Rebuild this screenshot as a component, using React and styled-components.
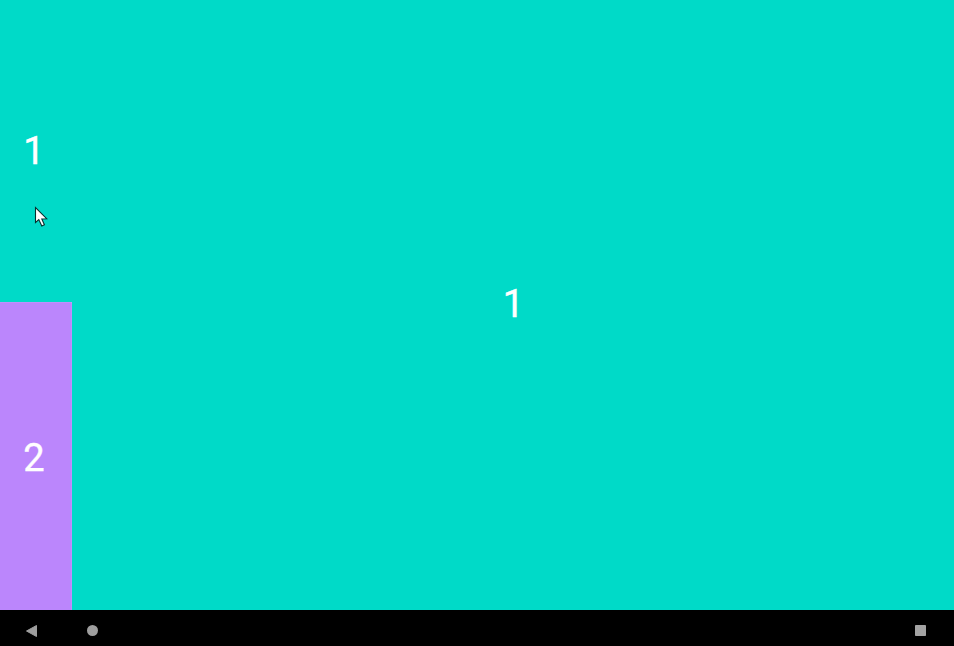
import React from "react"
import styled, { createGlobalStyle } from "styled-components"

const TEAL = "#00dac8"
const PURPLE = "#bb86fc"

const GlobalStyle = createGlobalStyle`
  html, body {
    margin: 0;
    padding: 0;
    height: 100%;
    overflow: hidden;
    background: ${TEAL};
    font-family: Roboto, "Liberation Sans", sans-serif;
  }
  #root {
    height: 100%;
  }
`
const Screen = styled.div`
  position: relative;
  display: flex;
  flex-direction: column;
  width: 954px;
  height: 646px;
`
const Content = styled.div`
  flex: 1;
  display: flex;
  min-height: 0;
`
const Sidebar = styled.div`
  width: 72px;
  display: flex;
  flex-direction: column;
`
const Tab = styled.div`
  height: ${(p) => p.$height}px;
  box-sizing: border-box;
  display: flex;
  align-items: center;
  justify-content: center;
  padding-right: 4px;
  padding-top: ${(p) => p.$offset}px;
  color: #fff;
  font-size: 38px;
  -webkit-text-stroke: 0.4px #fff;
  background: ${(p) => p.$color};
  box-shadow: ${(p) => (p.$raised ? "inset 0 1px 1px rgba(255,255,255,0.1), inset -1px 0 0 rgba(255,255,255,0.08)" : "none")};
`
const Main = styled.div`
  flex: 1;
  display: flex;
  align-items: center;
  justify-content: center;
  padding-bottom: 3px;
  padding-left: 1px;
  color: #fff;
  font-size: 38px;
  -webkit-text-stroke: 0.4px #fff;
  background: ${TEAL};
`
const NavBar = styled.div`
  height: 36px;
  box-sizing: border-box;
  flex: none;
  background: #000;
  display: flex;
  align-items: center;
  padding: 5px 28px 0 26px;
`
const NavIcon = styled.svg`
  display: block;
  margin-left: ${(p) => p.$gap || 0}px;
  margin-right: ${(p) => (p.$push ? "auto" : "0")};
`
const Cursor = styled.svg`
  position: absolute;
  left: 34px;
  top: 206px;
`

const App = () => (
  <Screen>
    <GlobalStyle />
    <Content>
      <Sidebar>
        <Tab $color={TEAL} $height={302} $offset={0}>1</Tab>
        <Tab $color={PURPLE} $height={308} $offset={4} $raised>2</Tab>
      </Sidebar>
      <Main>1</Main>
    </Content>
    <NavBar>
      <NavIcon width="11" height="12" viewBox="0 0 11 12">
        <path d="M10.5 0.5 L10.5 11.5 L0.5 6 Z" fill="#9e9e9e" stroke="#9e9e9e" strokeWidth="1" strokeLinejoin="round" />
      </NavIcon>
      <NavIcon width="11" height="11" viewBox="0 0 11 11" $gap={50} $push>
        <circle cx="5.5" cy="5.5" r="5.5" fill="#9e9e9e" />
      </NavIcon>
      <NavIcon width="11" height="11" viewBox="0 0 11 11">
        <rect x="0" y="0" width="11" height="11" rx="0.8" fill="#a3a3a3" />
      </NavIcon>
    </NavBar>
    <Cursor width="15" height="22" viewBox="0 0 15 22">
      <path d="M1.5 1.5 L1.5 16.5 L4.8 13.6 L7.8 20 L10.4 18.8 L7.8 13 L12.7 12.7 Z" fill="#fff" stroke="#06302e" strokeWidth="1.1" strokeLinejoin="miter" />
    </Cursor>
  </Screen>
)

export default App
